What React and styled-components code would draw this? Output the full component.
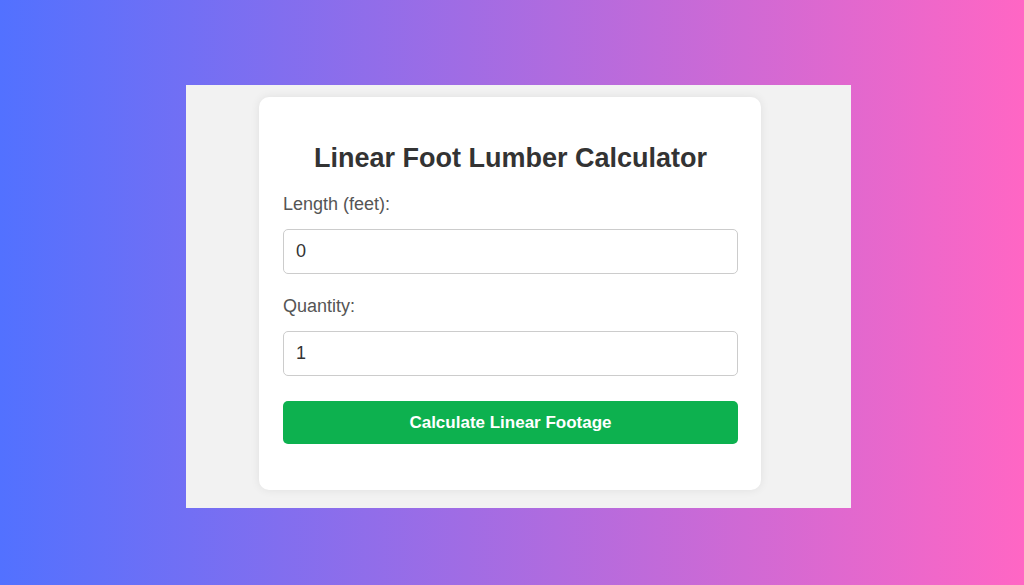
import React, { useState } from "react";
import styled, { createGlobalStyle } from "styled-components";

const GlobalStyle = createGlobalStyle`
  html, body {
    margin: 0;
    padding: 0;
  }
  body {
    font-family: "Liberation Sans", Arial, sans-serif;
  }
`;

const Page = styled.div`
  width: 1024px;
  height: 585px;
  box-sizing: border-box;
  padding: 85px 0 0 186px;
  background: linear-gradient(to right, #5271ff, #ff66c4);
  overflow: hidden;
`;

const Panel = styled.div`
  width: 665px;
  height: 423px;
  box-sizing: border-box;
  padding: 12px 0 0 73px;
  background: #f2f2f2;
`;

const Card = styled.div`
  width: 502px;
  box-sizing: border-box;
  padding: 45px 23px 46px 24px;
  background: #fff;
  border-radius: 10px;
  box-shadow: 0 0 10px rgba(0, 0, 0, 0.08);
`;

const Title = styled.h2`
  margin: 0 0 20px;
  font-size: 27px;
  line-height: 32px;
  font-weight: 700;
  color: #333;
  text-align: center;
`;

const Label = styled.label`
  display: block;
  margin-top: ${(p) => p.$top || 0}px;
  font-size: 18px;
  line-height: 21px;
  color: #555;
`;

const Input = styled.input`
  display: block;
  width: 100%;
  height: 45px;
  box-sizing: border-box;
  margin-top: 14px;
  padding: 0 12px;
  border: 1px solid #ccc;
  border-radius: 5px;
  font-family: inherit;
  font-size: 18px;
  color: #333;
  background: #fff;
  outline: none;
`;

const Button = styled.button`
  display: block;
  width: 100%;
  height: 43px;
  margin-top: 25px;
  border: none;
  border-radius: 5px;
  background: #0db14f;
  color: #fff;
  font-family: inherit;
  font-size: 17px;
  font-weight: 700;
  cursor: pointer;
`;

export default function App() {
  const [length, setLength] = useState("0");
  const [qty, setQty] = useState("1");

  return (
    <>
      <GlobalStyle />
      <Page>
        <Panel>
          <Card>
            <Title>Linear Foot Lumber Calculator</Title>
            <Label htmlFor="len">Length (feet):</Label>
            <Input id="len" type="text" value={length} onChange={(e) => setLength(e.target.value)} />
            <Label htmlFor="qty" $top={22}>Quantity:</Label>
            <Input id="qty" type="text" value={qty} onChange={(e) => setQty(e.target.value)} />
            <Button>Calculate Linear Footage</Button>
          </Card>
        </Panel>
      </Page>
    </>
  );
}
